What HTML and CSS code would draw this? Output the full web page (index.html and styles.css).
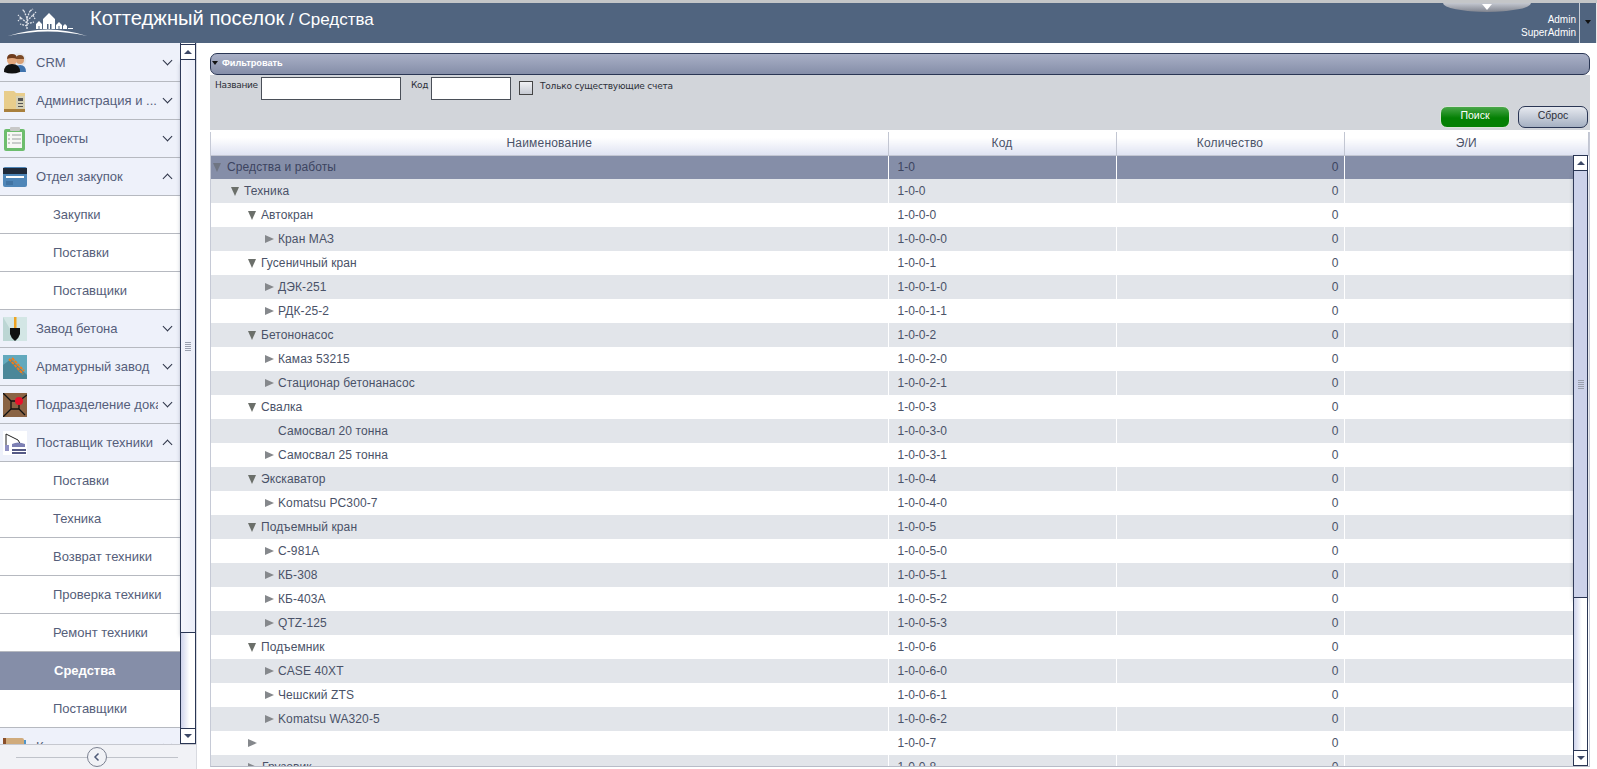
FILE: index.html
```html
<!DOCTYPE html>
<html lang="ru">
<head>
    <meta charset="UTF-8">
    <title>Коттеджный поселок / Средства</title>
    <link rel="stylesheet" href="styles.css">
</head>
<body>
    <header class="topbar">
        <svg class="logo" width="80" height="30" viewBox="0 0 80 30">
            <path d="M0 30 Q40 17 79 30 Q40 21 0 30Z" fill="#fff"/>
            <g stroke="#dfe3ea" stroke-width="1.300" fill="none" stroke-dasharray="2 1">
                <path d="M19 23V12M19 17l-6-5M19 15l6-6M19 20l-7-2M19 12l-3-7M19 12l3-7M19 18l7-2M13 12l-3-3M13 12l-3 3M25 9l3-3M25 9l2 4M16 5l-2-2M22 5l3-2"/>
            </g>
            <path d="M28 23v-5l3-3 3 3v5ZM35 23V13l6-6 6 6v10ZM48 23v-4l3-3 3 3v4ZM55 23v-3l2-2 2 2v3ZM60 23v-1h5v1Z" fill="#fff"/>
            <path d="M39 23v-5h1.500v5ZM42 23v-5h1.500v5ZM30.500 23v-3h1v3ZM50.500 23v-3h1v3Z" fill="#50647f"/>
        </svg>
        <div class="title"><span class="title-main">Коттеджный поселок</span> / Средства</div>
        <div class="pull-tab"><span class="pull-arrow"></span></div>
        <div class="user">
            <div>Admin</div>
            <div>SuperAdmin</div>
        </div>
        <div class="user-menu"><span class="user-arrow"></span></div>
    </header>

    <div class="main">
        <aside class="sidebar">
            <div class="side-top">
                <nav class="menu">
                    <div class="menu-item">
                        <svg class="menu-icon" viewBox="0 0 24 24"><circle cx="16" cy="9" r="7" fill="#e4e6ea"/><circle cx="17" cy="9" r="4" fill="#d9a074"/><path d="M17 4q4 0 4 4h-8q0-4 4-4Z" fill="#7c4a26"/><path d="M11 21q0-7 6-7t6 7Z" fill="#3f73ad"/><circle cx="9" cy="9" r="5" fill="#e3a77c"/><path d="M4 8q0-5 5-5t5 5q-5-2-10 0Z" fill="#6e3b1c"/><path d="M1 21q0-8 8-8t8 8q-8 3-16 0Z" fill="#111"/></svg>
                        <span class="menu-text">CRM</span><span class="chev down"></span>
                    </div>
                    <div class="menu-item">
                        <svg class="menu-icon" viewBox="0 0 24 24"><path d="M1 2h10l2 2h9v18H1Z" fill="#e8cd8c"/><path d="M13 7h9v15H13Z" fill="#d6d0b4"/><path d="M15 9h5v3h-5ZM15 14h5v1h-5ZM15 17h5v1h-5Z" fill="#555"/><path d="M1 20h21v3H1Z" fill="#a9803d"/></svg>
                        <span class="menu-text">Администрация и ...</span><span class="chev down"></span>
                    </div>
                    <div class="menu-item">
                        <svg class="menu-icon" viewBox="0 0 24 24"><rect x="1" y="2" width="21" height="22" rx="2" fill="#6dbd6d"/><rect x="4" y="5" width="15" height="16" fill="#f6f7f4"/><rect x="7" y="0" width="10" height="4" rx="1" fill="#c8c8c8"/><path d="M5 8h2M9 8h9M5 12h2M9 12h9M5 16h2M9 16h9" stroke="#9aa0a0"/></svg>
                        <span class="menu-text">Проекты</span><span class="chev down"></span>
                    </div>
                    <div class="menu-item">
                        <svg class="menu-icon" viewBox="0 0 24 24"><rect y="2" width="24" height="20" rx="2" fill="#4f86b8"/><rect y="3" width="24" height="6" fill="#1f2a3a"/><rect x="3" y="11" width="18" height="2" fill="#fff"/><rect x="3" y="16" width="7" height="4" fill="#4274a3"/></svg>
                        <span class="menu-text">Отдел закупок</span><span class="chev up"></span>
                    </div>
                    <div class="sub-item">Закупки</div>
                    <div class="sub-item">Поставки</div>
                    <div class="sub-item">Поставщики</div>
                    <div class="menu-item">
                        <svg class="menu-icon" viewBox="0 0 24 24"><rect width="24" height="24" fill="#d3e6e5"/><path d="M0 24V0l14 24Z" fill="#bcd6d4"/><rect x="11" y="0" width="2.500" height="12" fill="#eea321"/><path d="M7 11h10v6q-1 4-5 7-4-3-5-7Z" fill="#111"/></svg>
                        <span class="menu-text">Завод бетона</span><span class="chev down"></span>
                    </div>
                    <div class="menu-item">
                        <svg class="menu-icon" viewBox="0 0 24 24"><rect width="24" height="24" fill="#62a9bd"/><path d="M0 24V10l8-6 16 16v4Z" fill="#4b8799"/><path d="M6 4l14 15M9 3l12 13" stroke="#ef7d1a" stroke-width="2" stroke-dasharray="3 1"/></svg>
                        <span class="menu-text">Арматурный завод</span><span class="chev down"></span>
                    </div>
                    <div class="menu-item">
                        <svg class="menu-icon" viewBox="0 0 24 24"><rect width="24" height="24" fill="#8a6344"/><path d="M0 0l8 8M22 22l-6-6M24 2l-8 6M0 24l8-8M8 8h8v8H8Z" stroke="#111" stroke-width="1.300" fill="none"/><circle cx="16" cy="8" r="4" fill="#e8102a"/></svg>
                        <span class="menu-text">Подразделение дока</span><span class="chev down"></span>
                    </div>
                    <div class="menu-item">
                        <svg class="menu-icon" viewBox="0 0 24 24"><rect width="24" height="24" fill="#fff"/><path d="M3 16V3l12 6 3 5" stroke="#222" fill="none"/><path d="M2 14h4v6H2Z" fill="#8f8fc2"/><path d="M9 13q6-3 13 0v3H9Z" fill="#7d80b4"/><path d="M9 18h14v2H9ZM9 21h14v2H9Z" fill="#555a85"/></svg>
                        <span class="menu-text">Поставщик техники</span><span class="chev up"></span>
                    </div>
                    <div class="sub-item">Поставки</div>
                    <div class="sub-item">Техника</div>
                    <div class="sub-item">Возврат техники</div>
                    <div class="sub-item">Проверка техники</div>
                    <div class="sub-item">Ремонт техники</div>
                    <div class="sub-item active">Средства</div>
                    <div class="sub-item">Поставщики</div>
                    <div class="menu-item">
                        <svg class="menu-icon" viewBox="0 0 24 24"><rect y="3" width="21" height="14" rx="2" fill="#d0ab7c"/><rect y="3" width="3" height="14" fill="#8a4f2a"/><rect x="21" y="5" width="2" height="6" fill="#4f95c9"/></svg>
                        <span class="menu-text">Кадры</span><span class="chev down"></span>
                    </div>
                </nav>
                <div class="side-scroll">
                    <div class="scroll-btn"><span class="tri-up"></span></div>
                    <div class="side-thumb"><span class="grip"></span></div>
                    <div class="scroll-track"></div>
                    <div class="scroll-btn"><span class="tri-down"></span></div>
                </div>
            </div>
            <div class="collapse">
                <span class="collapse-circle">
                    <svg width="10" height="10" viewBox="0 0 10 10"><path d="M6.500 1.500 3 5l3.500 3.500" fill="none" stroke="#4f5b78" stroke-width="1.500"/></svg>
                </span>
            </div>
        </aside>

        <section class="content">
            <div class="filter-bar"><span class="filter-arrow"></span>Фильтровать</div>
            <div class="filter-panel">
                <div class="filter-fields">
                    <label class="filter-label">Название</label>
                    <input class="field field-name" type="text">
                    <label class="filter-label label-code">Код</label>
                    <input class="field field-code" type="text">
                    <span class="check"></span>
                    <span class="check-label">Только существующие счета</span>
                </div>
                <div class="filter-buttons">
                    <button class="btn btn-search">Поиск</button>
                    <button class="btn btn-reset">Сброс</button>
                </div>
            </div>

            <div class="grid-wrap">
                <table class="grid">
                    <colgroup>
                        <col class="col-name"><col class="col-code"><col class="col-qty"><col class="col-unit">
                    </colgroup>
                    <thead>
                        <tr><th>Наименование</th><th>Код</th><th>Количество</th><th>Э/И</th></tr>
                    </thead>
                    <tbody>
                        <tr class="selected"><td class="lv0"><i class="open"></i>Средства и работы</td><td>1-0</td><td class="num">0</td><td></td></tr>
                        <tr><td class="lv1"><i class="open"></i>Техника</td><td>1-0-0</td><td class="num">0</td><td></td></tr>
                        <tr><td class="lv2"><i class="open"></i>Автокран</td><td>1-0-0-0</td><td class="num">0</td><td></td></tr>
                        <tr><td class="lv3"><i class="closed"></i>Кран МАЗ</td><td>1-0-0-0-0</td><td class="num">0</td><td></td></tr>
                        <tr><td class="lv2"><i class="open"></i>Гусеничный кран</td><td>1-0-0-1</td><td class="num">0</td><td></td></tr>
                        <tr><td class="lv3"><i class="closed"></i>ДЭК-251</td><td>1-0-0-1-0</td><td class="num">0</td><td></td></tr>
                        <tr><td class="lv3"><i class="closed"></i>РДК-25-2</td><td>1-0-0-1-1</td><td class="num">0</td><td></td></tr>
                        <tr><td class="lv2"><i class="open"></i>Бетононасос</td><td>1-0-0-2</td><td class="num">0</td><td></td></tr>
                        <tr><td class="lv3"><i class="closed"></i>Камаз 53215</td><td>1-0-0-2-0</td><td class="num">0</td><td></td></tr>
                        <tr><td class="lv3"><i class="closed"></i>Стационар бетонанасос</td><td>1-0-0-2-1</td><td class="num">0</td><td></td></tr>
                        <tr><td class="lv2"><i class="open"></i>Свалка</td><td>1-0-0-3</td><td class="num">0</td><td></td></tr>
                        <tr><td class="lv3"><i class="leaf"></i>Самосвал 20 тонна</td><td>1-0-0-3-0</td><td class="num">0</td><td></td></tr>
                        <tr><td class="lv3"><i class="closed"></i>Самосвал 25 тонна</td><td>1-0-0-3-1</td><td class="num">0</td><td></td></tr>
                        <tr><td class="lv2"><i class="open"></i>Экскаватор</td><td>1-0-0-4</td><td class="num">0</td><td></td></tr>
                        <tr><td class="lv3"><i class="closed"></i>Komatsu PC300-7</td><td>1-0-0-4-0</td><td class="num">0</td><td></td></tr>
                        <tr><td class="lv2"><i class="open"></i>Подъемный кран</td><td>1-0-0-5</td><td class="num">0</td><td></td></tr>
                        <tr><td class="lv3"><i class="closed"></i>С-981А</td><td>1-0-0-5-0</td><td class="num">0</td><td></td></tr>
                        <tr><td class="lv3"><i class="closed"></i>КБ-308</td><td>1-0-0-5-1</td><td class="num">0</td><td></td></tr>
                        <tr><td class="lv3"><i class="closed"></i>КБ-403А</td><td>1-0-0-5-2</td><td class="num">0</td><td></td></tr>
                        <tr><td class="lv3"><i class="closed"></i>QTZ-125</td><td>1-0-0-5-3</td><td class="num">0</td><td></td></tr>
                        <tr><td class="lv2"><i class="open"></i>Подъемник</td><td>1-0-0-6</td><td class="num">0</td><td></td></tr>
                        <tr><td class="lv3"><i class="closed"></i>CASE 40XT</td><td>1-0-0-6-0</td><td class="num">0</td><td></td></tr>
                        <tr><td class="lv3"><i class="closed"></i>Чешский ZTS</td><td>1-0-0-6-1</td><td class="num">0</td><td></td></tr>
                        <tr><td class="lv3"><i class="closed"></i>Komatsu WA320-5</td><td>1-0-0-6-2</td><td class="num">0</td><td></td></tr>
                        <tr><td class="lv2"><i class="closed"></i></td><td>1-0-0-7</td><td class="num">0</td><td></td></tr>
                        <tr><td class="lv2"><i class="closed"></i>Грузовик</td><td>1-0-0-8</td><td class="num">0</td><td></td></tr>
                    </tbody>
                </table>
                <div class="grid-scroll">
                    <div class="scroll-btn"><span class="tri-up"></span></div>
                    <div class="grid-thumb"><span class="grip"></span></div>
                    <div class="scroll-track"></div>
                    <div class="scroll-btn"><span class="tri-down"></span></div>
                </div>
            </div>
        </section>
    </div>
</body>
</html>
```

FILE: styles.css
```css
* {
    box-sizing: border-box;
}
html, body {
    height: 100%;
    margin: 0;
    overflow: hidden;
}
body {
    font-family: 'Liberation Sans', Arial, sans-serif;
    font-size: 12px;
    color: #4a5268;
    background-color: #fff;
    display: flex;
    flex-direction: column;
}

/* top bar */
.topbar {
    height: 43px;
    flex: none;
    display: flex;
    align-items: flex-start;
    position: relative;
    background-color: #50647f;
    border-top: 3px solid #c4c6c8;
    color: #fff;
}
.logo {
    margin: 3px 0 0 8px;
    flex: none;
}
.title {
    margin: 3px 0 0 2px;
    font-size: 17px;
    line-height: 25px;
    flex: 1;
}
.title-main {
    font-size: 20.200px;
}
.pull-tab {
    position: absolute;
    left: 1443px;
    top: 0;
    width: 88px;
    height: 9px;
    border-radius: 0 0 44px 44px / 0 0 9px 9px;
    background: linear-gradient(to bottom, #c4c8d0, #80848f);
    display: flex;
    justify-content: center;
}
.pull-arrow {
    width: 0;
    height: 0;
    margin-top: 1px;
    border-left: 5px solid transparent;
    border-right: 5px solid transparent;
    border-top: 6px solid #fff;
}
.user {
    margin-top: 10px;
    padding-right: 3px;
    text-align: right;
    font-size: 10px;
    line-height: 13px;
}
.user-menu {
    width: 18px;
    height: 40px;
    border-left: 1px solid #c6ccd6;
    border-right: 1px solid #e8e8e8;
    display: flex;
    justify-content: center;
    padding-top: 17px;
}
.user-arrow {
    width: 0;
    height: 0;
    border-left: 3.500px solid transparent;
    border-right: 3.500px solid transparent;
    border-top: 4px solid #111;
}

.main {
    flex: 1;
    min-height: 0;
    display: flex;
}

/* left menu */
.sidebar {
    width: 197px;
    flex: none;
    display: flex;
    flex-direction: column;
    border-right: 1px solid #d8dae0;
}
.side-top {
    flex: 1;
    min-height: 0;
    display: flex;
    overflow: hidden;
}
.menu {
    width: 180px;
    flex: none;
    overflow: hidden;
    padding-top: 1px;
    background-color: #eef1fa;
}
.menu-item {
    height: 38px;
    display: flex;
    align-items: center;
    background-color: #eef1fa;
    border-bottom: 1px solid #b6b9c0;
    font-size: 13px;
    color: #555e7a;
    padding-left: 3px;
}
.menu-icon {
    width: 24px;
    height: 24px;
    flex: none;
    margin-right: 9px;
}
.menu-text {
    width: 122px;
    flex: none;
    white-space: nowrap;
    overflow: hidden;
}
.chev {
    width: 7px;
    height: 7px;
    margin-left: 6px;
    border-right: 1px solid #2c3347;
    border-bottom: 1px solid #2c3347;
}
.chev.down {
    transform: translateY(-2px) rotate(45deg);
}
.chev.up {
    transform: translateY(2px) rotate(-135deg);
}
.sub-item {
    height: 38px;
    line-height: 37px;
    padding-left: 53px;
    font-size: 13px;
    color: #555e7a;
    background-color: #fff;
    border-bottom: 1px solid #b6b9c0;
}
.sub-item.active {
    background-color: #858ea8;
    color: #fff;
    font-weight: bold;
    border-bottom-color: #858ea8;
    padding-left: 54px;
}
.side-scroll {
    width: 16px;
    flex: none;
    display: flex;
    flex-direction: column;
    padding-top: 1px;
    border-left: 1px solid #2a3654;
    border-right: 1px solid #2a3654;
}
.scroll-btn {
    height: 16px;
    flex: none;
    background-color: #fff;
    border: 1px solid #2a3654;
    display: flex;
    align-items: center;
    justify-content: center;
    margin: 0 -1px;
}
.tri-up, .tri-down {
    width: 0;
    height: 0;
    border-left: 4px solid transparent;
    border-right: 4px solid transparent;
}
.tri-up {
    border-bottom: 4px solid #3c4866;
}
.tri-down {
    border-top: 4px solid #3c4866;
}
.side-thumb {
    height: 573px;
    flex: none;
    background: linear-gradient(to right, #f4f5fc, #eaedf8);
    border-bottom: 1px solid #2a3654;
    box-shadow: 0 3px 4px rgba(70, 80, 110, 0.5);
    display: flex;
    align-items: center;
    justify-content: center;
}
.scroll-track {
    flex: 1;
    min-height: 0;
    background: linear-gradient(to right, #cfd4ec, #fff 60%);
}
.grip {
    width: 6px;
    height: 9px;
    background: repeating-linear-gradient(to bottom, #9aa0ae 0, #9aa0ae 1px, transparent 1px, transparent 2px);
}
.collapse {
    height: 25px;
    flex: none;
    display: flex;
    align-items: center;
    justify-content: center;
    padding: 0 18px 0 16px;
    background-color: #f1f2f6;
    border-top: 1px solid #c6c8cf;
    background-image: linear-gradient(#c0c3ca, #c0c3ca);
    background-size: 162px 1px;
    background-position: 16px 12px;
    background-repeat: no-repeat;
}
.collapse-circle {
    width: 20px;
    height: 20px;
    border: 1px solid #7a8090;
    border-radius: 50%;
    background-color: #f1f2f6;
    display: flex;
    align-items: center;
    justify-content: center;
}

/* filter */
.content {
    flex: 1;
    min-width: 0;
    display: flex;
    flex-direction: column;
    padding: 10px 7px 2px 13px;
}
.filter-bar {
    height: 22px;
    flex: none;
    display: flex;
    align-items: center;
    padding-bottom: 2px;
    border: 1px solid #2a3654;
    border-radius: 7px;
    background: linear-gradient(to bottom, #a9b0c6, #858ea8);
    color: #fff;
    font-size: 9.200px;
    font-weight: bold;
}
.filter-arrow {
    width: 0;
    height: 0;
    margin: 0 4px 0 1px;
    border-left: 3.500px solid transparent;
    border-right: 3.500px solid transparent;
    border-top: 4px solid #111;
}
.filter-panel {
    height: 55px;
    flex: none;
    background-color: #d2d5da;
    position: relative;
}
.filter-fields {
    display: flex;
    align-items: flex-start;
    padding: 2px 0 0 5px;
}
.filter-label {
    font-size: 9px;
    line-height: 13px;
    margin-top: 2px;
    color: #2c2f38;
    width: 46px;
    font-family: 'DejaVu Sans', sans-serif;
    letter-spacing: -0.300px;
}
.label-code {
    width: 20px;
    margin-left: 10px;
}
.field {
    height: 23px;
    border: 1px solid #4a4f58;
    background-color: #fff;
    padding: 0 3px;
}
.field-name {
    width: 140px;
}
.field-code {
    width: 80px;
}
.check {
    width: 14px;
    height: 14px;
    margin: 4px 0 0 8px;
    border: 1px solid #444;
    background: linear-gradient(to bottom, #f0f1f4, #c6cad2);
}
.check-label {
    margin: 2px 0 0 7px;
    font-size: 9px;
    line-height: 14px;
    color: #2c2f38;
    font-family: 'DejaVu Sans', sans-serif;
    letter-spacing: -0.200px;
}
.filter-buttons {
    position: absolute;
    right: 2px;
    top: 31px;
    display: flex;
    gap: 8px;
}
.btn {
    width: 70px;
    height: 22px;
    padding: 0 0 5px;
    border-radius: 7px;
    font-family: 'Liberation Sans', Arial, sans-serif;
    font-size: 10.500px;
}
.btn-search {
    color: #fff;
    border: 1px solid #d8e4d8;
    background: linear-gradient(to bottom, #4aa74a 0, #048004 55%, #048004 100%);
}
.btn-reset {
    color: #2c2f38;
    border: 1px solid #2a3654;
    background: linear-gradient(to bottom, #e6e9ef, #a5b0c2);
}

/* tree grid */
.grid-wrap {
    flex: 1;
    min-height: 0;
    position: relative;
    overflow: hidden;
    margin-top: 2px;
    border-left: 1px solid #c6cad6;
    border-bottom: 1px solid #b8bcc8;
    border-right: 1px solid #c6cad6;
}
.grid {
    width: 100%;
    table-layout: fixed;
    border-collapse: collapse;
}
.col-name {
    width: 677px;
}
.col-code {
    width: 228px;
}
.col-qty {
    width: 228px;
}
.grid th {
    height: 23px;
    padding: 0;
    font-weight: normal;
    font-size: 12px;
    letter-spacing: 0.200px;
    color: #4a5268;
    background: linear-gradient(to bottom, #fff 25%, #dfe3f2);
    border-right: 1px solid #c2c6d2;
    border-bottom: 1px solid #c2c6d2;
}
.grid td {
    height: 24px;
    padding: 0 0 0 9px;
    font-size: 12px;
    color: #4a5268;
    border-right: 1px solid #fff;
    white-space: nowrap;
}
.grid tbody tr:nth-child(even) td {
    background-color: #e2e5ea;
}
.grid tbody tr.selected td {
    background-color: #858ea8;
    color: #3c4460;
}
.grid td.num {
    text-align: right;
    padding: 0 5px 0 0;
}
.grid td.lv0, .grid td.lv1, .grid td.lv2, .grid td.lv3 {
    letter-spacing: 0.100px;
}
.grid td.lv0 {
    padding-left: 2px;
}
.grid td.lv0 i {
    margin-right: 6px;
}
.grid td.lv1 {
    padding-left: 20px;
}
.grid td.lv2 {
    padding-left: 37px;
}
.grid td.lv3 {
    padding-left: 54px;
}
.grid td i {
    display: inline-block;
    width: 0;
    height: 0;
    margin-right: 5px;
}
.grid td.lv3 i {
    margin-right: 4px;
}
.grid td i.open {
    border-left: 4.500px solid transparent;
    border-right: 4.500px solid transparent;
    border-top: 9px solid #6b6f6a;
    vertical-align: -1px;
}
.grid td i.closed {
    border-top: 4.500px solid transparent;
    border-bottom: 4.500px solid transparent;
    border-left: 9px solid #85888c;
    vertical-align: 0;
}
.selected td i.open {
    border-top-color: #6f7582;
}
.grid td i.leaf {
    width: 9px;
}
.grid-scroll {
    position: absolute;
    right: 1px;
    top: 23px;
    bottom: 0;
    width: 15px;
    display: flex;
    flex-direction: column;
    border-left: 1px solid #2a3654;
    border-right: 1px solid #2a3654;
}
.grid-thumb {
    height: 427px;
    flex: none;
    background-color: #ccd2ea;
    border-bottom: 1px solid #2a3654;
    box-shadow: 0 3px 4px rgba(70, 80, 110, 0.5);
    display: flex;
    align-items: center;
    justify-content: center;
}
```
